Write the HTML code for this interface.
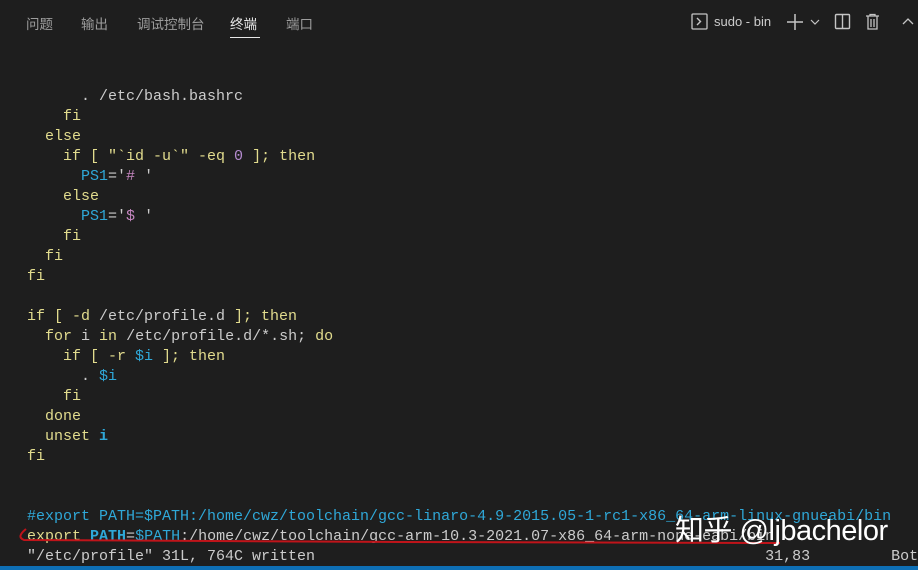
<!DOCTYPE html>
<html><head><meta charset="utf-8"><style>
body{margin:0;width:918px;height:570px;background:#1e1e1e;overflow:hidden;position:relative;font-family:"Liberation Sans","Noto Sans CJK SC",sans-serif}
.tab{position:absolute;top:13px;font-size:13.5px;color:#9d9d9d}
.code{position:absolute;left:27px;top:87px;font-family:"Liberation Mono",monospace;font-size:15px;line-height:20px;color:#cccccc;white-space:pre}
.y{color:#e2dc8e}.c{color:#2fa8d8}.m{color:#c586c0}.p{color:#b58bd0}.b{color:#2fa8d8;font-weight:bold}
</style></head><body>
<div class="tab" style="left:26px">问题</div>
<div class="tab" style="left:81px">输出</div>
<div class="tab" style="left:137px">调试控制台</div>
<div class="tab" style="left:230px;color:#e7e7e7">终端</div>
<div style="position:absolute;left:230px;top:37px;width:30px;height:1px;background:#e7e7e7"></div>
<div class="tab" style="left:286px">端口</div>
<svg style="position:absolute;left:690px;top:12px" width="20" height="20" viewBox="0 0 20 20"><rect x="2" y="2" width="15" height="15" rx="1" fill="none" stroke="#c5c5c5" stroke-width="1.3"/><path d="M7 6l3.5 3.5L7 13" fill="none" stroke="#c5c5c5" stroke-width="1.4"/></svg>
<div style="position:absolute;left:714px;top:14px;font-size:13px;color:#cccccc">sudo - bin</div>
<svg style="position:absolute;left:785px;top:12px" width="40" height="20"><path d="M10 2v16M2 10h16" stroke="#c5c5c5" stroke-width="1.5"/><path d="M26 8l4 4 4-4" fill="none" stroke="#c5c5c5" stroke-width="1.2"/></svg>
<svg style="position:absolute;left:833px;top:12px" width="20" height="20"><rect x="2.5" y="2.5" width="14" height="14" rx="1" fill="none" stroke="#c5c5c5" stroke-width="1.4"/><path d="M9.5 2.5v14" stroke="#c5c5c5" stroke-width="1.4"/></svg>
<svg style="position:absolute;left:863px;top:12px" width="20" height="20"><path d="M3 4h13M7 4V2.5h5V4M5 4v13h9V4M8 7v8M11 7v8" fill="none" stroke="#c5c5c5" stroke-width="1.3"/></svg>
<svg style="position:absolute;left:900px;top:12px" width="18" height="20"><path d="M3 12l5-5 5 5" fill="none" stroke="#c5c5c5" stroke-width="1.3"/></svg>
<div class="code">      . /etc/bash.bashrc
    <span class="y">fi</span>
  <span class="y">else</span>
    <span class="y">if [ "`id -u`" -eq </span><span class="p">0</span><span class="y"> ]; then</span>
      <span class="c">PS1</span>='<span class="m">#</span> '
    <span class="y">else</span>
      <span class="c">PS1</span>='<span class="m">$</span> '
    <span class="y">fi</span>
  <span class="y">fi</span>
<span class="y">fi</span>

<span class="y">if [ -d </span>/etc/profile.d <span class="y">]; then</span>
  <span class="y">for</span> i <span class="y">in</span> /etc/profile.d/*.sh; <span class="y">do</span>
    <span class="y">if [ -r </span><span class="c">$i</span><span class="y"> ]; then</span>
      . <span class="c">$i</span>
    <span class="y">fi</span>
  <span class="y">done</span>
  <span class="y">unset</span> <span class="b">i</span>
<span class="y">fi</span>


<span class="c">#export PATH=$PATH:/home/cwz/toolchain/gcc-linaro-4.9-2015.05-1-rc1-x86_64-arm-linux-gnueabi/bin</span>
<span class="y">export</span> <span class="b">PATH</span>=<span class="c">$PATH</span>:/home/cwz/toolchain/gcc-arm-10.3-2021.07-x86_64-arm-none-eabi/bin
"/etc/profile" 31L, 764C written                                                  31,83         Bot</div>
<svg style="position:absolute;left:0;top:525px" width="918" height="30"><path d="M26 4 Q16 12 24 15 L400 17 L780 18" fill="none" stroke="#c0141a" stroke-width="2"/></svg>
<div style="position:absolute;left:675px;top:507px;font-size:29px;color:#fff;letter-spacing:-0.5px">知乎 @ljbachelor</div>
<div style="position:absolute;left:0;top:566px;width:918px;height:4px;background:#0e6fb5"></div>
</body></html>
